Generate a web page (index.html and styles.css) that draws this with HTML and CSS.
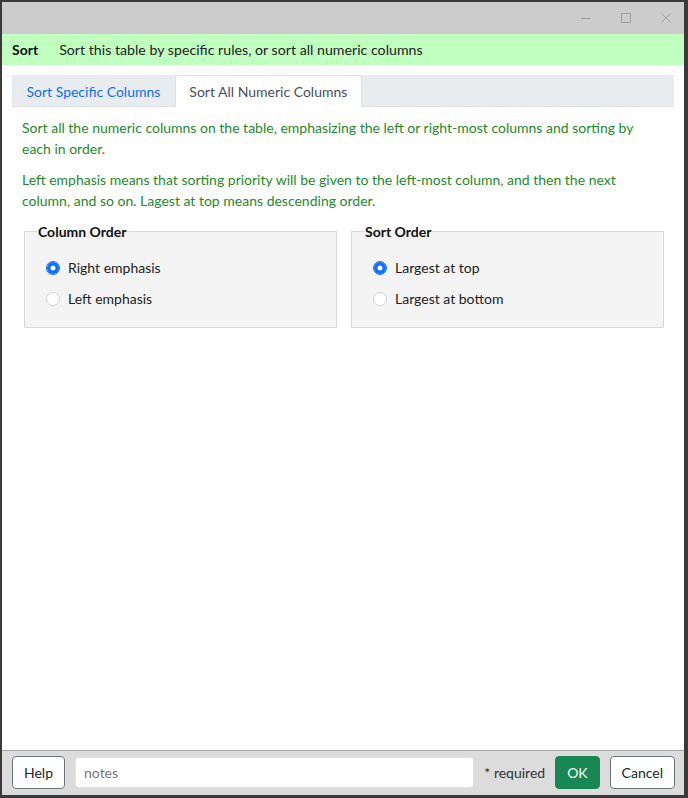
FILE: index.html
```html
<!DOCTYPE html>
<html lang="en">
<head>
<meta charset="utf-8">
<title>Sort</title>
<link rel="stylesheet" href="styles.css">
</head>
<body>
<div class="window">
  <div class="titlebar">
    <span class="tb-btn"><svg width="10" height="10" viewBox="0 0 10 10"><line x1="0" y1="5.5" x2="10" y2="5.5" stroke="#a0a0a0" stroke-width="1"/></svg></span>
    <span class="tb-btn"><svg width="10" height="10" viewBox="0 0 10 10"><rect x="0.5" y="0.5" width="9" height="9" fill="none" stroke="#a0a0a0" stroke-width="1"/></svg></span>
    <span class="tb-btn"><svg width="10" height="10" viewBox="0 0 10 10"><path d="M0.5 0.5 L9.5 9.5 M9.5 0.5 L0.5 9.5" stroke="#a0a0a0" stroke-width="1" fill="none"/></svg></span>
  </div>
  <div class="header">
    <span class="header-title">Sort</span>
    <span class="header-desc">Sort this table by specific rules, or sort all numeric columns</span>
  </div>
  <div class="main">
    <div class="tabs">
      <div class="tab">Sort Specific Columns</div>
      <div class="tab active">Sort All Numeric Columns</div>
    </div>
    <div class="tab-content">
      <p class="desc">Sort all the numeric columns on the table, emphasizing the left or right-most columns and sorting by each in order.</p>
      <p class="desc">Left emphasis means that sorting priority will be given to the left-most column, and then the next column, and so on. Lagest at top means descending order.</p>
      <div class="groups">
        <fieldset class="group">
          <legend>Column Order</legend>
          <div class="opts">
            <label class="opt"><span class="radio checked"></span>Right emphasis</label>
            <label class="opt"><span class="radio"></span>Left emphasis</label>
          </div>
        </fieldset>
        <fieldset class="group">
          <legend>Sort Order</legend>
          <div class="opts">
            <label class="opt"><span class="radio checked"></span>Largest at top</label>
            <label class="opt"><span class="radio"></span>Largest at bottom</label>
          </div>
        </fieldset>
      </div>
    </div>
  </div>
  <div class="footer">
    <button class="btn">Help</button>
    <div class="notes">notes</div>
    <span class="required">* required</span>
    <button class="btn ok">OK</button>
    <button class="btn">Cancel</button>
  </div>
</div>
</body>
</html>
```

FILE: styles.css
```css
* { box-sizing: border-box; }
html, body { margin: 0; padding: 0; }
body {
  background: #3a3a3a;
  font-family: "Lato", "Noto Sans", sans-serif;
  font-size: 14px;
  color: #212529;
}
.window {
  margin: 2px 4px 3px 2px;
  height: 793px;
  background: #ffffff;
  display: flex;
  flex-direction: column;
}
.titlebar {
  height: 32px;
  background: #cccccc;
  display: flex;
  justify-content: flex-end;
  align-items: center;
  gap: 30px;
  padding-right: 13px;
}
.tb-btn { display: flex; width: 10px; height: 10px; }
.header {
  height: 31px;
  background: #c0ffc0;
  display: flex;
  align-items: center;
  padding-left: 10px;
  gap: 21px;
}
.header-title { font-weight: bold; color: #111; }
.header-desc { color: #222; font-size: 14.2px; }
.main {
  flex: 1;
  padding: 10px 10px 0 10px;
}
.tabs {
  display: flex;
  height: 32px;
  background: #e9ecef;
  border-bottom: 1px solid #dee2e6;
}
.tab {
  padding: 0 13.5px;
  display: flex;
  align-items: center;
  color: #0d6efd;
  height: 32px;
  border: 1px solid transparent;
  border-top-left-radius: 4px;
  border-top-right-radius: 4px;
}
.tab.active {
  background: #ffffff;
  color: #495057;
  border-color: #dee2e6 #dee2e6 #ffffff;
}
.tab-content {
  padding: 10px 10px 0 10px;
}
.desc {
  margin: 0 0 10px 0;
  line-height: 21px;
  color: #248a2c;
}
.groups {
  display: grid;
  grid-template-columns: 1fr 1fr;
  gap: 14px;
  padding-left: 2px;
  margin-top: 10px;
}
.group {
  margin: 0;
  border: 1px solid #d9d9d9;
  background: #f4f4f4;
  padding: 0 12px 18px 21px;
  min-width: 0;
}
.group legend {
  font-weight: bold;
  line-height: 21px;
  padding: 0 1px;
  margin-left: -9px;
  color: #111;
}
.opts {
  display: flex;
  flex-direction: column;
  gap: 10px;
  padding-top: 15px;
}
.opt {
  display: flex;
  align-items: center;
  gap: 8px;
  line-height: 21px;
  color: #222;
}
.radio {
  width: 14px;
  height: 14px;
  border-radius: 50%;
  border: 1px solid #cfd3d7;
  background: #ffffff;
  flex: none;
}
.radio.checked {
  border-color: #0d6efd;
  box-shadow: inset 0 0 0 3.5px #0d6efd, inset 0 0 0 7px #ffffff;
  background: #ffffff;
}
.footer {
  height: 45px;
  background: #dcdcdc;
  border-top: 1px solid #a8a8a8;
  display: flex;
  align-items: center;
  gap: 10px;
  padding: 0 9px 1px 10px;
}
.btn {
  font: inherit;
  height: 33px;
  padding: 0 11px;
  border: 1px solid #6c757d;
  border-radius: 4px;
  background: #ffffff;
  color: #212529;
}
.btn.ok {
  background: #198754;
  border-color: #198754;
  color: #ffffff;
}
.notes {
  flex: 1;
  height: 31px;
  background: #ffffff;
  border: 1px solid #e2e2e2;
  border-radius: 4px;
  display: flex;
  align-items: center;
  padding-left: 8px;
  color: #777;
}
.required { color: #333; }
```
